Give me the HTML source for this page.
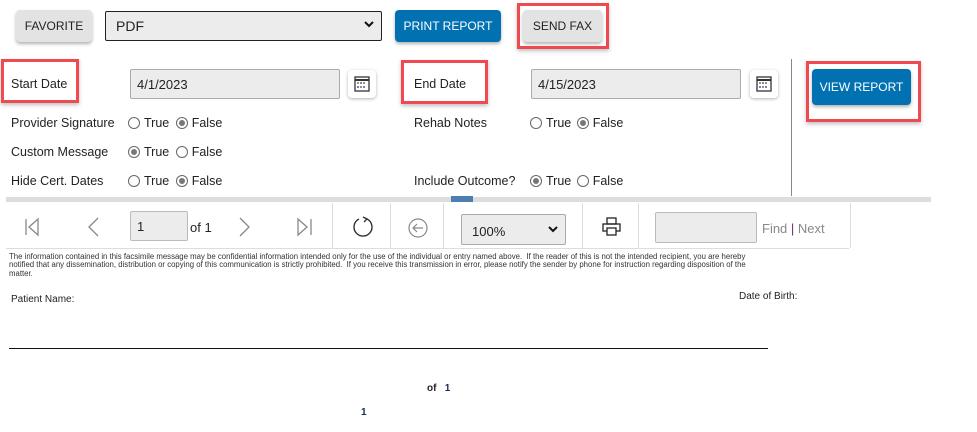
<!DOCTYPE html>
<html><head><meta charset="utf-8"><style>
*{box-sizing:border-box;margin:0;padding:0}
body{width:977px;height:432px;background:#fff;font-family:"Liberation Sans",sans-serif;color:#222;position:relative;overflow:hidden;font-size:13px}
.a{position:absolute}
.btn{position:absolute;border-radius:4px;font-size:12px;display:flex;align-items:center;justify-content:center}
.gray{background:#e3e3e3;box-shadow:0 2px 3px rgba(0,0,0,.3);color:#222}
.blue{background:#0271b2;color:#fff;box-shadow:0 2px 3px rgba(0,0,0,.3)}
.red{position:absolute;border:3px solid #ee4a4f;box-shadow:0 2px 4px rgba(0,0,0,.25)}
.inp{position:absolute;background:#ececec;border:1px solid #aaa;border-radius:2px;font-size:13px;padding-left:6px;display:flex;align-items:center}
.cal{position:absolute;width:28px;height:28px;background:#fff;border-radius:4px;box-shadow:0 1px 3px rgba(0,0,0,.3)}
.rd{display:inline-block;width:12px;height:12px;border:1px solid #666;border-radius:50%;vertical-align:-2px;margin-right:4px;position:relative}
.rd.on::after{content:"";position:absolute;left:2px;top:2px;width:6px;height:6px;border-radius:50%;background:#777}
.lbl{position:absolute;font-size:12.5px}
.opt{position:absolute;font-size:12.5px;white-space:nowrap}
.sep{position:absolute;top:203px;width:1px;height:45px;background:#ddd}
</style></head><body>
<div class="btn gray" style="left:16px;top:10px;width:76px;height:32px">FAVORITE</div>
<div class="a" style="left:105px;top:11px;width:277px;height:30px;border:1px solid #222;border-radius:2px;background:#ececec;font-size:14px;padding:6px 10px">PDF</div>
<svg class="a" style="left:364px;top:21px" width="10" height="8"><path d="M1 1l4 4 4-4" stroke="#111" stroke-width="2" fill="none"/></svg>
<div class="btn blue" style="left:395px;top:10px;width:106px;height:32px">PRINT REPORT</div>
<div class="red" style="left:517px;top:3px;width:92px;height:46px"></div>
<div class="btn gray" style="left:523px;top:10px;width:79px;height:32px">SEND FAX</div>

<div class="red" style="left:1px;top:59px;width:78px;height:44px"></div>
<div class="lbl" style="left:11px;top:77px">Start Date</div>
<div class="inp" style="left:130px;top:69px;width:210px;height:30px">4/1/2023</div>
<div class="cal" style="left:348px;top:70px"><svg width="28" height="28"><rect x="7" y="7" width="14" height="14" fill="none" stroke="#333" stroke-width="1.3"/><line x1="7" y1="10" x2="21" y2="10" stroke="#333" stroke-width="2"/><g fill="#b86"><rect x="9" y="12" width="2" height="2"/><rect x="12" y="12" width="2" height="2" fill="#68c"/><rect x="15" y="12" width="2" height="2"/><rect x="9" y="16" width="2" height="2" fill="#68c"/><rect x="12" y="16" width="2" height="2"/><rect x="15" y="16" width="2" height="2" fill="#68c"/></g></svg></div>
<div class="red" style="left:401px;top:60px;width:87px;height:44px"></div>
<div class="lbl" style="left:414px;top:77px">End Date</div>
<div class="inp" style="left:531px;top:69px;width:210px;height:30px">4/15/2023</div>
<div class="cal" style="left:750px;top:70px"><svg width="28" height="28"><rect x="7" y="7" width="14" height="14" fill="none" stroke="#333" stroke-width="1.3"/><line x1="7" y1="10" x2="21" y2="10" stroke="#333" stroke-width="2"/><g fill="#b86"><rect x="9" y="12" width="2" height="2"/><rect x="12" y="12" width="2" height="2" fill="#68c"/><rect x="15" y="12" width="2" height="2"/><rect x="9" y="16" width="2" height="2" fill="#68c"/><rect x="12" y="16" width="2" height="2"/><rect x="15" y="16" width="2" height="2" fill="#68c"/></g></svg></div>
<div class="a" style="left:791px;top:59px;width:1px;height:137px;background:#888"></div>
<div class="red" style="left:806px;top:61px;width:115px;height:61px"></div>
<div class="btn blue" style="left:812px;top:69px;width:99px;height:36px">VIEW REPORT</div>

<div class="lbl" style="left:11px;top:116px">Provider Signature</div>
<div class="opt" style="left:128px;top:116px"><span class="rd"></span>True <span class="rd on" style="margin-left:3px"></span>False</div>
<div class="lbl" style="left:11px;top:145px">Custom Message</div>
<div class="opt" style="left:128px;top:145px"><span class="rd on"></span>True <span class="rd" style="margin-left:3px"></span>False</div>
<div class="lbl" style="left:11px;top:174px">Hide Cert. Dates</div>
<div class="opt" style="left:128px;top:174px"><span class="rd"></span>True <span class="rd on" style="margin-left:3px"></span>False</div>
<div class="lbl" style="left:414px;top:116px">Rehab Notes</div>
<div class="opt" style="left:530px;top:116px"><span class="rd"></span>True <span class="rd on" style="margin-left:2px"></span>False</div>
<div class="lbl" style="left:414px;top:174px">Include Outcome?</div>
<div class="opt" style="left:530px;top:174px"><span class="rd on"></span>True <span class="rd" style="margin-left:2px"></span>False</div>

<div class="a" style="left:6px;top:197px;width:925px;height:5px;background:#ddd"></div>
<div class="a" style="left:451px;top:196px;width:22px;height:6px;background:#4a7fae"></div>

<div class="sep" style="left:332px"></div><div class="sep" style="left:390px"></div><div class="sep" style="left:443px"></div><div class="sep" style="left:582px"></div><div class="sep" style="left:638px"></div><div class="sep" style="left:850px"></div>
<div class="a" style="left:6px;top:248px;width:843px;height:1px;background:#ddd"></div>
<svg class="a" style="left:20px;top:215px" width="330" height="26" fill="none" stroke="#888" stroke-width="1.3">
<line x1="6" y1="4" x2="6" y2="20"/><path d="M18 4l-9 8 9 8z"/>
<path d="M78 3l-9 9 9 9"/>
<path d="M220 3l9 9-9 9"/>
<path d="M278 4l9 8-9 8z"/><line x1="291" y1="4" x2="291" y2="20"/>
</svg>
<div class="inp" style="left:130px;top:211px;width:58px;height:30px;border-color:#bbb">1</div>
<div class="a" style="left:190px;top:220px;font-size:13px;color:#222">of 1</div>
<svg class="a" style="left:350px;top:215px" width="26" height="26" fill="none" stroke="#333" stroke-width="1.4"><path d="M9 4A9 9 0 1 0 17 4"/><path d="M13 2l4 2-3 3"/></svg>
<svg class="a" style="left:406px;top:216px" width="24" height="24" fill="none" stroke="#888" stroke-width="1.2"><circle cx="12" cy="12" r="9"/><path d="M17 12H7M11 8l-4 4 4 4"/></svg>
<div class="a" style="left:461px;top:214px;width:105px;height:31px;background:#ececec;border:1px solid #aaa;border-radius:2px;font-size:13px;padding:9px 10px">100%</div>
<svg class="a" style="left:548px;top:226px" width="10" height="8"><path d="M1 1l4 4 4-4" stroke="#111" stroke-width="2" fill="none"/></svg>
<svg class="a" style="left:600px;top:215px" width="24" height="24" fill="none" stroke="#222" stroke-width="1.3"><rect x="7" y="3" width="9" height="6"/><rect x="3" y="9" width="17" height="7"/><rect x="7" y="13" width="9" height="7" fill="#fff"/></svg>
<div class="a" style="left:655px;top:212px;width:102px;height:31px;background:#ececec;border:1px solid #bbb;border-radius:2px"></div>
<div class="a" style="left:762px;top:221px;font-size:13px;color:#888">Find <span style="color:#7a2a7a">|</span> Next</div>

<div class="a" style="left:9px;top:253px;width:756px;font-size:7.8px;line-height:8.3px;color:#333">The information contained in this facsimile message may be confidential information intended only for the use of the individual or entry named above.&nbsp; If the reader of this is not the intended recipient, you are hereby notified that any dissemination, distribution or copying of this communication is strictly prohibited.&nbsp; If you receive this transmission in error, please notify the sender by phone for instruction regarding disposition of the matter.</div>
<div class="a" style="left:11px;top:294px;font-size:10px">Patient Name:</div>
<div class="a" style="left:739px;top:291px;font-size:10px">Date of Birth:</div>
<div class="a" style="left:9px;top:348px;width:759px;height:1px;background:#111"></div>
<div class="a" style="left:427px;top:383px;font-size:10px;font-weight:bold">of &nbsp; <span style="color:#1a2a5a">1</span></div>
<div class="a" style="left:361px;top:407px;font-size:10px;font-weight:bold;color:#1a2a5a">1</div>
</body></html>
